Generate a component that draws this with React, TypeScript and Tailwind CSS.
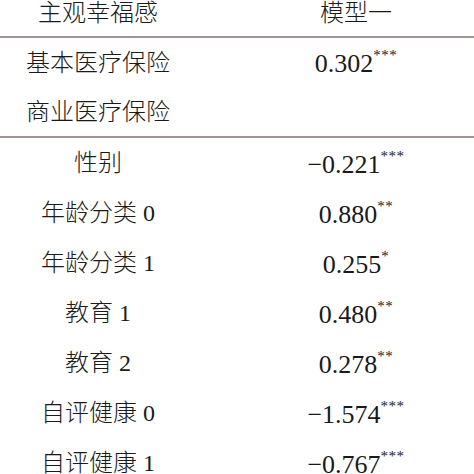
const rowsTop = [
  { label: "基本医疗保险", value: "0.302", stars: "***" },
  { label: "商业医疗保险", value: "", stars: "" },
];

const rowsBottom = [
  { label: "性别", value: "−0.221", stars: "***" },
  { label: "年龄分类 0", value: "0.880", stars: "**" },
  { label: "年龄分类 1", value: "0.255", stars: "*" },
  { label: "教育 1", value: "0.480", stars: "**" },
  { label: "教育 2", value: "0.278", stars: "**" },
  { label: "自评健康 0", value: "−1.574", stars: "***" },
  { label: "自评健康 1", value: "−0.767", stars: "***" },
];

const Value = ({ value, stars }: { value: string; stars: string }) => (
  <span className="whitespace-nowrap text-[26px]">
    {value}
    {stars && (
      <span className="text-[15px] align-[12px] tracking-[0.5px]">{stars}</span>
    )}
  </span>
);

const Row = ({
  label,
  value,
  stars,
  h,
}: {
  label: string;
  value: string;
  stars: string;
  h: string;
}) => (
  <div className={`flex items-center ${h}`}>
    <div className="w-[196px] text-center whitespace-nowrap">{label}</div>
    <div className="ml-auto w-[236px] text-center">
      <Value value={value} stars={stars} />
    </div>
  </div>
);

export default function App() {
  return (
    <div
      className="w-[474px] h-[474px] overflow-hidden bg-white text-[#1a1a1a] text-[24px] font-light leading-none"
      style={{ fontFamily: '"Liberation Serif", "Noto Sans CJK SC", serif' }}
    >
      <div className="flex items-center h-[36px] pb-[10px]">
        <div className="w-[196px] text-center">主观幸福感</div>
        <div className="ml-auto w-[236px] text-center">模型一</div>
      </div>
      <div className="border-t-2 border-[#a39391]">
        {rowsTop.map((r) => (
          <Row key={r.label} {...r} h="h-[49px]" />
        ))}
      </div>
      <div className="border-t-2 border-[#a39391]">
        {rowsBottom.map((r) => (
          <Row key={r.label} {...r} h="h-[50px]" />
        ))}
      </div>
    </div>
  );
}
